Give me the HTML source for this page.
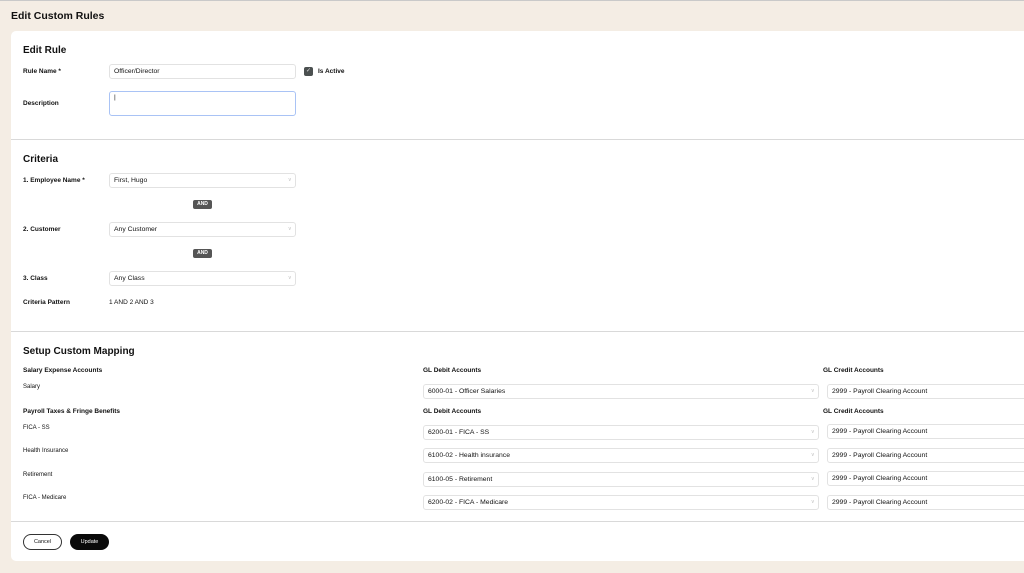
<!DOCTYPE html>
<html><head><style>
*{box-sizing:border-box;margin:0;padding:0}
body{width:1024px;height:573px;background:#f4ede4;font-family:"Liberation Sans",sans-serif;color:#111;position:relative;overflow:hidden}
.a{position:absolute;white-space:nowrap}
.card{position:absolute;left:11px;top:31px;width:1020px;height:530px;background:#fff;border-radius:5px}
.h1{font-size:11px;font-weight:bold}
.h2{font-size:10px;font-weight:bold}
.lb{font-size:6.5px;font-weight:bold}
.t{font-size:6.5px}
.in{position:absolute;height:15px;border:1px solid #e2e2e2;border-radius:3px;background:#fff;font-size:6.8px;padding-left:4px;line-height:13px}
.in .ch{position:absolute;right:4px;top:0;color:#bbb;font-size:5px}
.hr{position:absolute;left:11px;width:1013px;height:1px;background:#d9d9d9}
.and{position:absolute;left:193px;width:19px;height:9px;background:#555;color:#fff;font-size:5px;font-weight:bold;border-radius:2px;text-align:center;line-height:9px}
</style></head><body>
<div class="a" style="left:0;top:0;width:1024px;height:1px;background:#c9c9c9"></div>
<div class="a h1" style="left:11px;top:10px;font-size:10.5px">Edit Custom Rules</div>
<div class="card"></div>
<div class="a h2" style="left:23px;top:45px">Edit Rule</div>
<div class="a lb" style="left:23px;top:68px">Rule Name *</div>
<div class="in" style="left:109px;top:64px;width:187px">Officer/Director</div>
<div class="a" style="left:304px;top:67px;width:9px;height:9px;background:#4b5050;border-radius:2px;color:#ddd;font-size:6px;text-align:center;line-height:9px">✓</div>
<div class="a lb" style="left:318px;top:68px">Is Active</div>
<div class="a lb" style="left:23px;top:100px">Description</div>
<div class="in" style="left:109px;top:91px;width:187px;height:25px;border:1.5px solid #a9c3f5;line-height:12px">|</div>
<div class="hr" style="top:139px"></div>
<div class="a h2" style="left:23px;top:154px">Criteria</div>
<div class="a lb" style="left:23px;top:177px">1. Employee Name *</div>
<div class="in" style="left:109px;top:173px;width:187px">First, Hugo<span class="ch">v</span></div>
<div class="and" style="top:200px">AND</div>
<div class="a lb" style="left:23px;top:226px">2. Customer</div>
<div class="in" style="left:109px;top:222px;width:187px">Any Customer<span class="ch">v</span></div>
<div class="and" style="top:249px">AND</div>
<div class="a lb" style="left:23px;top:275px">3. Class</div>
<div class="in" style="left:109px;top:271px;width:187px">Any Class<span class="ch">v</span></div>
<div class="a lb" style="left:23px;top:299px">Criteria Pattern</div>
<div class="a t" style="left:109px;top:299px">1 AND 2 AND 3</div>
<div class="hr" style="top:331px"></div>
<div class="a h2" style="left:23px;top:346px">Setup Custom Mapping</div>
<div class="a lb" style="left:23px;top:367px">Salary Expense Accounts</div>
<div class="a t" style="left:23px;top:384px;font-size:6px">Salary</div>
<div class="a lb" style="left:423px;top:367px">GL Debit Accounts</div>
<div class="a lb" style="left:823px;top:367px">GL Credit Accounts</div>
<div class="in" style="left:423px;top:384px;width:396px">6000-01 - Officer Salaries<span class="ch">v</span></div>
<div class="in" style="left:827px;top:384px;width:200px">2999 - Payroll Clearing Account</div>
<div class="a lb" style="left:23px;top:408px">Payroll Taxes &amp; Fringe Benefits</div>
<div class="a lb" style="left:423px;top:408px">GL Debit Accounts</div>
<div class="a lb" style="left:823px;top:408px">GL Credit Accounts</div>
<div class="a t" style="left:23px;top:425px;font-size:6px">FICA - SS</div>
<div class="a t" style="left:23px;top:448px;font-size:6px">Health Insurance</div>
<div class="a t" style="left:23px;top:472px;font-size:6px">Retirement</div>
<div class="a t" style="left:23px;top:495px;font-size:6px">FICA - Medicare</div>
<div class="in" style="left:423px;top:425px;width:396px">6200-01 - FICA - SS<span class="ch">v</span></div>
<div class="in" style="left:827px;top:424px;width:200px">2999 - Payroll Clearing Account</div>
<div class="in" style="left:423px;top:448px;width:396px">6100-02 - Health insurance<span class="ch">v</span></div>
<div class="in" style="left:827px;top:448px;width:200px">2999 - Payroll Clearing Account</div>
<div class="in" style="left:423px;top:472px;width:396px">6100-05 - Retirement<span class="ch">v</span></div>
<div class="in" style="left:827px;top:471px;width:200px">2999 - Payroll Clearing Account</div>
<div class="in" style="left:423px;top:495px;width:396px">6200-02 - FICA - Medicare<span class="ch">v</span></div>
<div class="in" style="left:827px;top:495px;width:200px">2999 - Payroll Clearing Account</div>
<div class="hr" style="top:521px"></div>
<div class="a" style="left:23px;top:534px;width:39px;height:16px;border:1px solid #333;border-radius:8px;font-size:5.5px;text-align:center;line-height:14px">Cancel</div>
<div class="a" style="left:70px;top:534px;width:39px;height:16px;background:#0a0a0a;color:#fff;border-radius:8px;font-size:5.5px;text-align:center;line-height:16px">Update</div>
</body></html>
